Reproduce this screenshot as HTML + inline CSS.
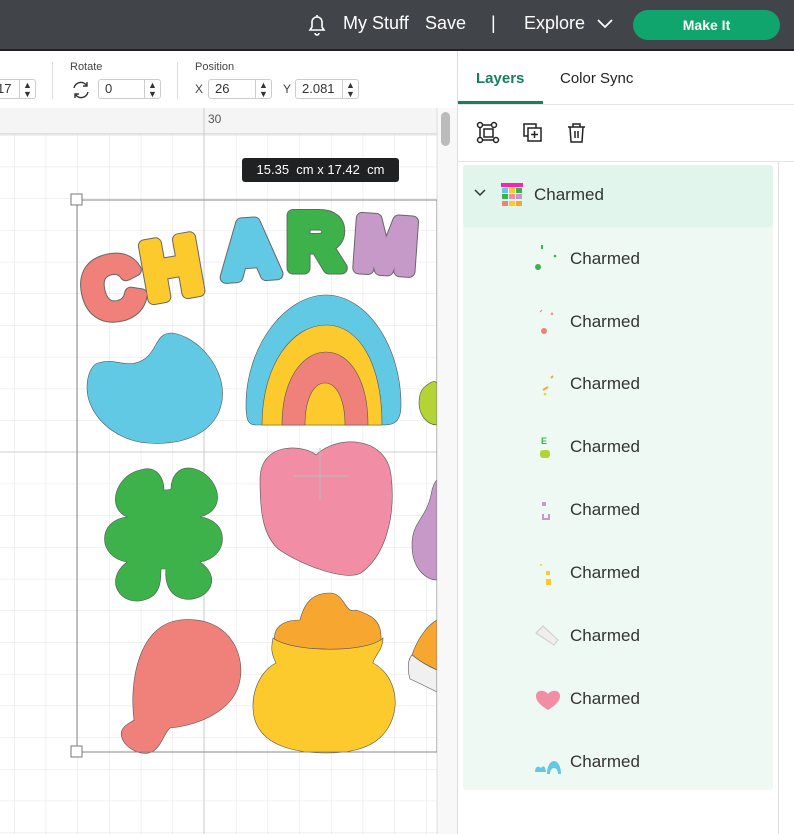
<!DOCTYPE html>
<html><head><meta charset="utf-8"><style>
*{box-sizing:border-box;margin:0;padding:0}
body{width:794px;height:834px;overflow:hidden;background:#fff;font-family:"Liberation Sans",sans-serif;position:relative;color:#222}
.top{position:absolute;left:0;top:0;width:794px;height:51px;background:#414449;border-bottom:2px solid #222}
.top span{position:absolute;top:13px;color:#fff;font-size:18px}
.btn{position:absolute;left:633px;top:10px;width:147px;height:30px;background:#10a56c;border-radius:15px;color:#fff;font-size:14px;font-weight:bold;text-align:center;line-height:30px}
.lbl{position:absolute;font-size:11px;color:#444}
.inp{position:absolute;height:20px;border:1px solid #ccc;border-radius:3px;font-size:13px;line-height:18px;padding-left:6px;color:#333}
.inp i{position:absolute;right:0;top:0;width:16px;height:18px;border-left:1px solid #ccc;font-style:normal;font-size:9px;text-align:center;line-height:9px;padding-top:1px}
.row{position:absolute;left:463px;width:310px;height:63px}
.row span{position:absolute;left:107px;top:22px;font-size:17px;color:#333}
</style></head><body>
<div class="top">
<svg style="position:absolute;left:306px;top:13px" width="22" height="24" viewBox="0 0 22 24"><path d="M11 2v2M4 17h14l-2-3v-5a5 5 0 0 0-10 0v5z M9 20a2 2 0 0 0 4 0" fill="none" stroke="#fff" stroke-width="1.6"/></svg>
<span style="left:343px">My Stuff</span><span style="left:425px">Save</span>
<span style="left:491px">|</span><span style="left:524px">Explore</span>
<svg style="position:absolute;left:597px;top:19px" width="16" height="10"><path d="M1 1l7 7 7-7" fill="none" stroke="#fff" stroke-width="1.8"/></svg>
<div class="btn">Make It</div>
</div>
<div class="inp" style="left:-10px;top:79px;width:46px">17<i>▲<br>▼</i></div>
<div style="position:absolute;left:52px;top:62px;width:1px;height:37px;background:#ddd"></div>
<div class="lbl" style="left:70px;top:61px">Rotate</div>
<svg style="position:absolute;left:71px;top:80px" width="20" height="20" viewBox="0 0 20 20"><path d="M3 8a7 7 0 0 1 13-2M17 12a7 7 0 0 1-13 2M16 2v4h-4M4 18v-4h4" fill="none" stroke="#333" stroke-width="1.4"/></svg>
<div class="inp" style="left:98px;top:79px;width:63px">0<i>▲<br>▼</i></div>
<div style="position:absolute;left:177px;top:62px;width:1px;height:37px;background:#ddd"></div>
<div class="lbl" style="left:195px;top:61px">Position</div>
<div class="lbl" style="left:195px;top:82px;font-size:12px">X</div>
<div class="inp" style="left:208px;top:79px;width:64px">26<i>▲<br>▼</i></div>
<div class="lbl" style="left:283px;top:82px;font-size:12px">Y</div>
<div class="inp" style="left:295px;top:79px;width:64px">2.081<i>▲<br>▼</i></div>
<svg style="position:absolute;left:0;top:108px" width="457" height="726">
<defs><pattern id="g" x="14" y="27" width="31.7" height="31.7" patternUnits="userSpaceOnUse"><path d="M0 0V31.7M0 0H31.7" stroke="#e3e3e3" stroke-width="1" fill="none"/></pattern></defs>
<rect x="0" y="0" width="437" height="726" fill="#fff"/>
<rect x="0" y="25" width="437" height="701" fill="url(#g)"/>
<line x1="204" y1="25" x2="204" y2="726" stroke="#cfcfcf"/>
<line x1="0" y1="344" x2="437" y2="344" stroke="#cfcfcf"/>
<rect x="0" y="0" width="437" height="26" fill="#f5f5f5"/>
<line x1="0" y1="26" x2="437" y2="26" stroke="#ccc"/>
<line x1="204" y1="0" x2="204" y2="26" stroke="#ccc"/>
<text x="208" y="15" font-size="12" fill="#555" font-family="Liberation Sans">30</text>
<rect x="437" y="0" width="20" height="726" fill="#f8f8f8"/>
<line x1="437" y1="0" x2="437" y2="726" stroke="#ddd"/>
<rect x="441" y="4" width="9" height="34" rx="4.5" fill="#bbb"/>
</svg>
<svg style="position:absolute;left:0;top:0" width="437" height="834" font-family="Liberation Sans" font-weight="bold">
<g stroke-linejoin="round" stroke-linecap="round">
<g stroke="#666" stroke-width="13">
<text x="82" y="316" font-size="80" fill="#f0807a" transform="rotate(-12 110 280)">C</text>
<text x="142" y="296" font-size="78" fill="#fdca2e" transform="rotate(-10 165 260)">H</text>
<text x="222" y="276" font-size="76" fill="#62c9e4" transform="rotate(-4 245 245)">A</text>
<text x="288" y="268" font-size="76" fill="#3db24a">R</text>
<text x="356" y="270" font-size="72" fill="#c799c8" transform="rotate(4 390 240)">M</text>
</g>
<text x="82" y="316" font-size="80" fill="#f0807a" stroke="#f0807a" stroke-width="11" transform="rotate(-12 110 280)">C</text>
<text x="142" y="296" font-size="78" fill="#fdca2e" stroke="#fdca2e" stroke-width="11" transform="rotate(-10 165 260)">H</text>
<text x="222" y="276" font-size="76" fill="#62c9e4" stroke="#62c9e4" stroke-width="11" transform="rotate(-4 245 245)">A</text>
<text x="288" y="268" font-size="76" fill="#3db24a" stroke="#3db24a" stroke-width="11">R</text>
<text x="356" y="270" font-size="72" fill="#c799c8" stroke="#c799c8" stroke-width="11" transform="rotate(4 390 240)">M</text>
</g>
<g stroke="#555" stroke-width="0.6">
<path d="M98 363c20-6 30 8 48-5 12-10 10-25 26-25 25 3 55 35 50 68-5 30-35 45-75 42-35-3-60-30-60-55 0-15 6-24 11-25z" fill="#62c9e4"/>
<path d="M246 405c0-60 40-110 80-110s75 50 75 110c0 20-10 20-20 20h-125c-8 0-10-5-10-20z" fill="#62c9e4"/>
<path d="M262 425c0-60 30-100 64-100s56 40 56 100z" fill="#fdca2e"/>
<path d="M282 425c0-45 20-73 44-73s42 28 42 73h-23c0-25-8-42-20-42s-20 17-20 42z" fill="#f0807a"/>
<path d="M427 385c10-8 10 0 10 0v40c-10 0-18-10-18-22 0-10 3-15 8-18z" fill="#b4d334"/>
<path d="M140 470c18-6 24 10 24 20 3 0 5 0 7-1 0-10 6-25 24-20 22 6 35 40 5 48 30 3 30 40 0 45 28 20 0 45-22 35-12-6-13-20-12-28h-5c0 10 0 25-14 30-25 10-45-18-20-37-30-5-30-42 0-45-22-10-10-42 13-47z" fill="#3db24a"/>
<path d="M260 480c0-40 45-35 56-25 20-20 70-20 75 20 5 40-5 80-30 98-15 8-55-6-80-22-20-14-21-46-21-71z" fill="#f18da4"/>
<path d="M437 480v100c-10 0-25-10-25-35 0-25 15-25 20-55 3-10 5-10 5-10z" fill="#c799c8"/>
<path d="M180 620c50-5 65 35 60 60-5 30-40 45-70 48-6 5-8 18-18 24-15 6-35-10-30-22 3-6 10-8 12-10-5-40 5-95 46-100z" fill="#f0807a"/>
<path d="M275 645c-5-25 20-25 25-25 5-20 15-27 30-27s15 22 26 17c15 5 26 10 25 30-3 10-50 12-106 5z" fill="#f7a730"/>
<path d="M273 638c20 15 95 15 110 0 0 12-10 20-10 25 20 10 30 40 15 65-15 25-50 25-62 25-25 0-60-5-70-30-8-20 0-50 20-60-5-10-5-15-3-25z" fill="#fdca2e"/>
<path d="M437 620v50c-10-5-20-10-25-15 5-15 15-30 25-35z" fill="#f7a730"/>
<path d="M412 655c10 8 20 13 25 15v22c-10-5-20-10-27-13-3-10-2-20 2-24z" fill="#f0f0f0"/>
</g>
<line x1="320" y1="448" x2="320" y2="500" stroke="#bbb"/><line x1="293" y1="476" x2="348" y2="476" stroke="#bbb"/>
<rect x="77" y="200" width="360" height="552" fill="none" stroke="#888" stroke-width="1"/>
<rect x="71" y="194" width="11" height="11" fill="#fff" stroke="#777"/>
<rect x="71" y="746" width="11" height="11" fill="#fff" stroke="#777"/>
</svg>
<div style="position:absolute;left:242px;top:158px;width:157px;height:24px;background:#1f2123;border-radius:3px;color:#fff;font-size:13px;line-height:24px;text-align:center;font-weight:normal">15.35&nbsp; cm x 17.42&nbsp; cm</div>
<div style="position:absolute;left:457px;top:51px;width:337px;height:783px;background:#fff;border-left:1px solid #ddd"></div>
<div style="position:absolute;left:476px;top:70px;font-size:15px;color:#15805a;font-weight:bold">Layers</div>
<div style="position:absolute;left:560px;top:70px;font-size:15px;color:#222">Color Sync</div>
<div style="position:absolute;left:458px;top:101px;width:85px;height:3px;background:#15805a"></div>
<div style="position:absolute;left:458px;top:104px;width:336px;height:1px;background:#e5e5e5"></div>
<svg style="position:absolute;left:476px;top:120px" width="124" height="26" viewBox="0 0 124 26" fill="none" stroke="#222" stroke-width="1.5">
<circle cx="4" cy="5" r="2.5"/><circle cx="18" cy="5" r="2.5"/><circle cx="4" cy="20" r="2.5"/><circle cx="20" cy="20" r="2.5"/><rect x="8" y="9" width="9" height="8"/><path d="M6 5h10M4 8v10M7 20h10"/>
<rect x="48" y="4" width="12" height="12"/><rect x="52" y="8" width="13" height="13" fill="#fff"/><path d="M58.5 11v7M55 14.5h7"/>
<path d="M92 7h17M97 7V4h7v3M94 7l1 15h11l1-15M99 11v7M102 11v7"/>
</svg>
<div style="position:absolute;left:458px;top:161px;width:336px;height:1px;background:#e5e5e5"></div>
<div style="position:absolute;left:463px;top:165px;width:310px;height:625px;background:#eef9f4;border-radius:3px"></div>
<div style="position:absolute;left:463px;top:165px;width:310px;height:62px;background:#e2f5ec;border-radius:3px"></div>
<div style="position:absolute;left:778px;top:162px;width:1px;height:672px;background:#e0e0e0"></div>
<svg style="position:absolute;left:474px;top:188px" width="12" height="10"><path d="M1 2l5 5 5-5" fill="none" stroke="#333" stroke-width="1.5"/></svg>
<svg style="position:absolute;left:500px;top:182px" width="24" height="26"><rect x="1" y="1" width="22" height="4" fill="#f2a"/><rect x="2" y="6" width="6" height="5" fill="#62c9e4"/><rect x="9" y="6" width="6" height="5" fill="#fdca2e"/><rect x="16" y="6" width="6" height="5" fill="#3db24a"/><rect x="2" y="12" width="6" height="5" fill="#3db24a"/><rect x="9" y="12" width="6" height="5" fill="#f18da4"/><rect x="16" y="12" width="6" height="5" fill="#c799c8"/><rect x="2" y="19" width="6" height="5" fill="#f0807a"/><rect x="9" y="19" width="6" height="5" fill="#fdca2e"/><rect x="16" y="19" width="6" height="5" fill="#f7a730"/></svg>
<div style="position:absolute;left:534px;top:185px;font-size:17px;color:#333">Charmed</div>
<div class="row" style="top:227px"><svg style="position:absolute;left:70px;top:16px" width="30" height="30"><circle cx="5" cy="24" r="3" fill="#3db24a"/><rect x="8" y="2" width="2" height="4" fill="#3db24a"/><circle cx="22" cy="13" r="1.3" fill="#3db24a"/></svg><span>Charmed</span></div>
<div class="row" style="top:290px"><svg style="position:absolute;left:70px;top:16px" width="30" height="30"><circle cx="11" cy="25" r="3" fill="#f0807a"/><path d="M7 6l2-2M18 9l1-2 1 2" stroke="#f0807a" fill="none"/></svg><span>Charmed</span></div>
<div class="row" style="top:352px"><svg style="position:absolute;left:70px;top:16px" width="30" height="30"><path d="M10 22l5-3M18 10l2-2" stroke="#f7a730" stroke-width="2"/><circle cx="12" cy="26" r="1.3" fill="#fdca2e"/></svg><span>Charmed</span></div>
<div class="row" style="top:415px"><svg style="position:absolute;left:70px;top:16px" width="30" height="30"><rect x="7" y="19" width="10" height="8" rx="3" fill="#b4d334"/><text x="8" y="13" font-size="9" fill="#3db24a" font-weight="bold">E</text></svg><span>Charmed</span></div>
<div class="row" style="top:478px"><svg style="position:absolute;left:70px;top:16px" width="30" height="30"><rect x="9" y="8" width="4" height="4" fill="#c799c8"/><path d="M10 20v5h6v-5" stroke="#c799c8" stroke-width="2" fill="none"/></svg><span>Charmed</span></div>
<div class="row" style="top:541px"><svg style="position:absolute;left:70px;top:16px" width="30" height="30"><rect x="13" y="22" width="5" height="6" fill="#fdca2e"/><rect x="13" y="14" width="4" height="4" fill="#fdca2e"/><circle cx="8" cy="8" r="1" fill="#fdca2e"/></svg><span>Charmed</span></div>
<div class="row" style="top:604px"><svg style="position:absolute;left:70px;top:16px" width="30" height="30"><path d="M3 13l7-7 15 14-4 5z" fill="#eee" stroke="#ccc"/></svg><span>Charmed</span></div>
<div class="row" style="top:667px"><svg style="position:absolute;left:70px;top:16px" width="30" height="30"><path d="M15 27c-6-4-12-8-12-14 0-6 8-7 12-2 4-5 12-4 12 2 0 6-6 10-12 14z" fill="#f18da4"/></svg><span>Charmed</span></div>
<div class="row" style="top:730px"><svg style="position:absolute;left:70px;top:16px" width="30" height="30"><path d="M2 26c0-5 3-7 6-4 3-3 4-2 5 4z" fill="#62c9e4"/><path d="M14 28c0-9 4-13 7-13s7 4 7 13h-3c0-4-2-6-4-6s-4 2-4 6z" fill="#62c9e4"/></svg><span>Charmed</span></div>
</body></html>
